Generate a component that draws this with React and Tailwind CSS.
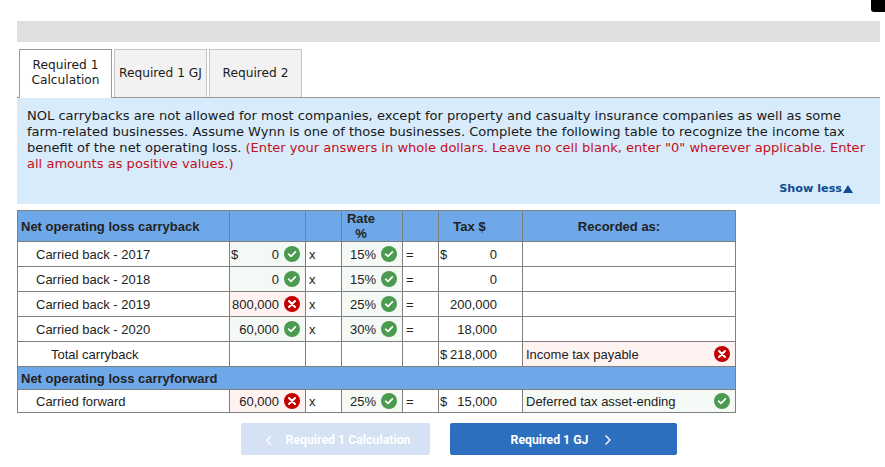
import React from 'react'
import {FiChevronLeft, FiChevronRight} from "react-icons/fi";

const Mark = ({ok}) => (
  <span className={`inline-flex w-4 h-4 shrink-0 rounded-full items-center justify-center ${ok ? 'bg-[#4a9a50]' : 'bg-[#c40000]'}`}>
    {ok ? (
      <svg width="10" height="10" viewBox="0 0 10 10" fill="none" stroke="white" strokeWidth="1.7" strokeLinecap="round" strokeLinejoin="round"><path d="M1.6 5.2 4 7.4 8.4 2.8" /></svg>
    ) : (
      <svg width="10" height="10" viewBox="0 0 10 10" fill="none" stroke="white" strokeWidth="2" strokeLinecap="round"><path d="M2 2 8 8M8 2 2 8" /></svg>
    )}
  </span>
)

const Answer = ({value, ok, dollar}) => (
  <td className={`border border-[#7f7f7f] p-0 ${ok ? 'bg-[#f4f9f5]' : 'bg-[#fff3f2]'}`}>
    <div className="flex items-center pl-[1px] pr-[5px]">
      {dollar && <span className="pt-[2px]">$</span>}
      <span className="flex-1 text-right pr-[5px] pt-[2px]">{value}</span>
      <Mark ok={ok} />
    </div>
  </td>
)

const Head = ({children, className = ''}) => (
  <td className={`border border-[#7f7f7f] p-0 ${className}`}>{children}</td>
)

const Cell = ({children, className = ''}) => (
  <td className={`border border-[#7f7f7f] p-0 pt-[2px] ${className}`}>{children}</td>
)

const Money = ({value, dollar}) => (
  <Cell>
    <div className="flex pl-[1px] pr-[25px]">
      {dollar && <span>$</span>}
      <span className="flex-1 text-right">{value}</span>
    </div>
  </Cell>
)

const Account = ({name, ok}) => (
  <td className={`border border-[#7f7f7f] p-0 ${ok ? 'bg-[#f4f9f5]' : 'bg-[#fff3f2]'}`}>
    <div className="flex items-center justify-between pl-[3px] pr-[5px]">
      <span className="pt-[2px]">{name}</span>
      <Mark ok={ok} />
    </div>
  </td>
)

const rows = [
  {label: 'Carried back - 2017', amount: '0', amountOk: true, dollar: true, rate: '15%', tax: '0'},
  {label: 'Carried back - 2018', amount: '0', amountOk: true, rate: '15%', tax: '0'},
  {label: 'Carried back - 2019', amount: '800,000', amountOk: false, rate: '25%', tax: '200,000'},
  {label: 'Carried back - 2020', amount: '60,000', amountOk: true, rate: '30%', tax: '18,000'},
]

const Tab = ({children, active}) => (
  <div className={`w-[93px] flex items-center justify-center text-center text-[12.2px] leading-[15px] text-[#1a1a1a] border border-b-0 ${active ? 'bg-white border-[#9a9a9a] h-[49px] pb-[2px] -mb-[1px] relative z-10' : 'bg-[#f2f2f2] border-[#c4c4c4] h-[48px]'}`}>
    {children}
  </div>
)

const App = () => {
  return (
    <div className="w-[885px] h-[467px] overflow-hidden bg-white relative font-['DejaVu_Sans',sans-serif]">
      <div className="absolute top-0 right-0 w-[14px] h-[12px] bg-black rounded-bl-[3px]"></div>
      <div className="w-[863px] ml-[17px] pt-[21px]">
        <div className="h-[21px] bg-[#dfdfdf]"></div>
        <div className="flex gap-[2px] pl-[2px] mt-[7px]">
          <Tab active>Required 1<br />Calculation</Tab>
          <Tab>Required 1 GJ</Tab>
          <Tab>Required 2</Tab>
        </div>
        <div className="h-[107px] bg-[#d7ebfa] border-t border-[#999999] pl-[10px] pr-[6px] pt-[10px] relative text-[13.05px] leading-[16px] text-[#1a1a1a]">
          <p>
            NOL carrybacks are not allowed for most companies, except for property and casualty insurance companies as well as some farm-related businesses. Assume Wynn is one of those businesses. Complete the following table to recognize the income tax benefit of the net operating loss.{' '}
            <span className="text-[#c40f1c]">(Enter your answers in whole dollars. Leave no cell blank, enter "0" wherever applicable. Enter all amounts as positive values.)</span>
          </p>
          <div className="absolute right-[27px] top-[83px] flex items-center gap-[1px] text-[11.2px] font-bold text-[#0f4c92]">
            Show less
            <svg width="10" height="8" viewBox="0 0 10 8"><path d="M5 0 10 8H0z" fill="#0f4c92" /></svg>
          </div>
        </div>

        <table className="mt-[6px] w-[718px] table-fixed border-collapse font-['Liberation_Sans',sans-serif] text-[13px] text-[#222222]">
          <colgroup>
            <col className="w-[212px]" />
            <col className="w-[76px]" />
            <col className="w-[36px]" />
            <col className="w-[61px]" />
            <col className="w-[36px]" />
            <col className="w-[84px]" />
            <col className="w-[213px]" />
          </colgroup>
          <thead>
            <tr className="h-[31px] bg-[#6fa8e8] font-bold leading-[15px]">
              <Head className="pl-[3px]">Net operating loss carryback</Head>
              <Head />
              <Head />
              <Head className="text-center pr-[22px]">Rate<br />%</Head>
              <Head />
              <Head className="text-center pr-[22px]">Tax $</Head>
              <Head className="text-center pr-[20px]">Recorded as:</Head>
            </tr>
          </thead>
          <tbody>
            {rows.map((r) => (
              <tr key={r.label} className="h-[25px]">
                <Cell className="pl-[18px]">{r.label}</Cell>
                <Answer value={r.amount} ok={r.amountOk} dollar={r.dollar} />
                <Cell className="pl-[3px]">x</Cell>
                <Answer value={r.rate} ok />
                <Cell className="pl-[3px]">=</Cell>
                <Money value={r.tax} dollar={r.dollar} />
                <Cell />
              </tr>
            ))}
            <tr className="h-[25px]">
              <Cell className="pl-[33px]">Total carryback</Cell>
              <Cell />
              <Cell />
              <Cell />
              <Cell />
              <Money value="218,000" dollar />
              <Account name="Income tax payable" ok={false} />
            </tr>
            <tr className="h-[23px] bg-[#6fa8e8] font-bold">
              <td colSpan={7} className="border border-[#7f7f7f] p-0 pl-[3px] pt-[2px]">Net operating loss carryforward</td>
            </tr>
            <tr className="h-[23px]">
              <Cell className="pl-[18px]">Carried forward</Cell>
              <Answer value="60,000" ok={false} />
              <Cell className="pl-[3px]">x</Cell>
              <Answer value="25%" ok />
              <Cell className="pl-[3px]">=</Cell>
              <Money value="15,000" dollar />
              <Account name="Deferred tax asset-ending" ok />
            </tr>
          </tbody>
        </table>

        <div className="flex gap-[20px] mt-[10px] ml-[224px] font-['Roboto',sans-serif] text-[12.3px] font-bold text-white">
          <div className="w-[189px] h-[32px] pt-[2px] rounded-[2px] bg-[#d5e2f3] flex items-center justify-center gap-[10px]">
            <FiChevronLeft size={15} />
            Required 1 Calculation
          </div>
          <div className="w-[227px] h-[32px] pt-[2px] rounded-[2px] bg-[#2d6fbf] flex items-center justify-center gap-[12px]">
            Required 1 GJ
            <FiChevronRight size={16} />
          </div>
        </div>
      </div>
    </div>
  )
}

export default App
